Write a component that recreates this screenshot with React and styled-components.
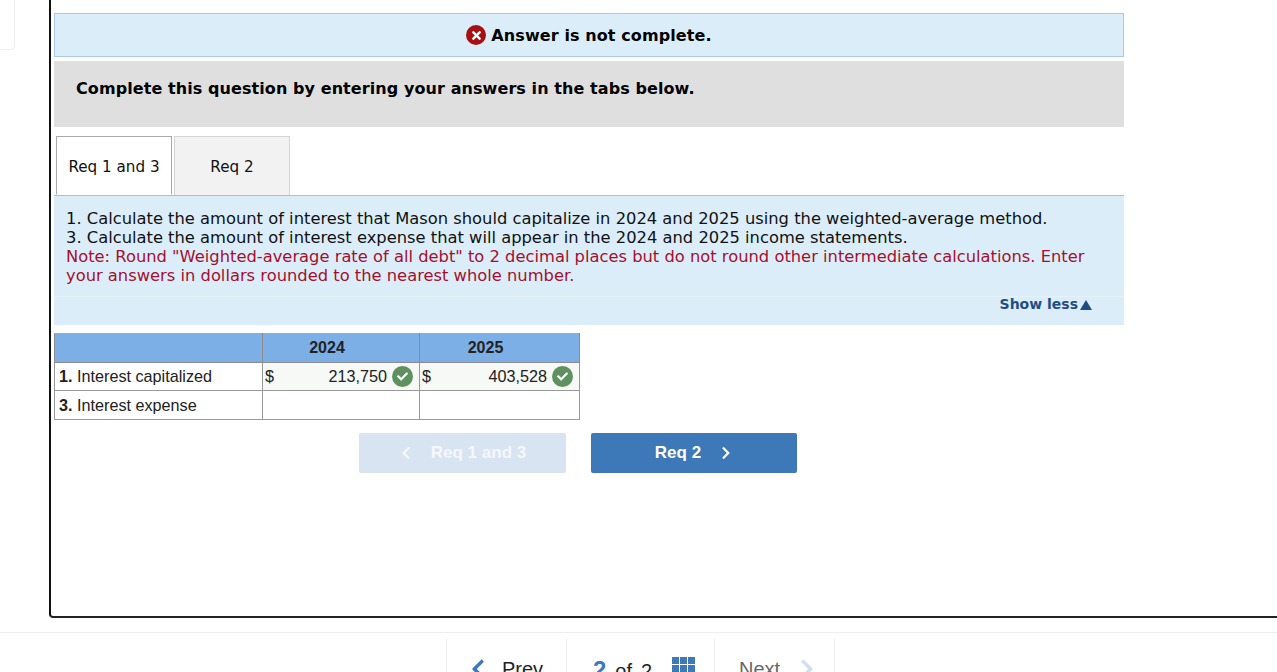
import React from 'react';
import styled, { createGlobalStyle } from 'styled-components';
import { FaCheck, FaTimes, FaChevronLeft, FaChevronRight } from 'react-icons/fa';

const GlobalStyle = createGlobalStyle`
  html, body {
    margin: 0;
    padding: 0;
    background: #fff;
    overflow: hidden;
  }
`;

const Page = styled.div`
  position: relative;
  width: 1277px;
  height: 672px;
  overflow: hidden;
  background: #fff;
`;

// card edge peeking in at the top left
const SideCard = styled.div`
  position: absolute;
  left: -20px;
  top: -10px;
  width: 33px;
  height: 58px;
  border: 1px solid #eee;
  border-radius: 4px;
`;

const Frame = styled.div`
  box-sizing: border-box;
  width: 1260px;
  height: 618px;
  margin-left: 49px;
  padding: 13px 0 0 3px;
  border-left: 2px solid #111;
  border-bottom: 2px solid #222;
  border-bottom-left-radius: 4px;
`;

const Content = styled.div`
  width: 1070px;
  font-family: 'DejaVu Sans', Verdana, sans-serif;
  color: #111;
`;

const AlertBar = styled.div`
  box-sizing: border-box;
  height: 44px;
  display: flex;
  align-items: center;
  justify-content: center;
  gap: 5px;
  background: #dcedfa;
  border: 1px solid #a9cbe8;
  font-size: 16px;
  letter-spacing: 0.1px;
  font-weight: bold;
  color: #000;
`;

const ErrorIcon = styled.span`
  width: 20px;
  height: 20px;
  border-radius: 50%;
  background: #a80f12;
  color: #fff;
  display: flex;
  align-items: center;
  justify-content: center;
  font-size: 13px;
`;

const Instruction = styled.div`
  box-sizing: border-box;
  height: 66px;
  margin-top: 4px;
  padding: 18px 22px 0;
  background: #dfdfdf;
  font-size: 16px;
  letter-spacing: 0.08px;
  line-height: 20px;
  font-weight: bold;
  color: #000;
`;

const TabRow = styled.div`
  display: flex;
  gap: 2px;
  height: 60px;
  margin-top: 9px;
  padding-left: 2px;
  border-bottom: 1px solid #bbb;
  box-sizing: border-box;
`;

const Tab = styled.div`
  box-sizing: border-box;
  width: 116px;
  padding-top: 2px;
  display: flex;
  align-items: center;
  justify-content: center;
  font-size: 15.2px;
  color: #111;
  background: ${p => (p.$active ? '#fff' : '#f2f2f2')};
  border: 1px solid ${p => (p.$active ? '#aaa' : '#d4d4d4')};
  border-bottom: ${p => (p.$active ? '1px solid #fff' : '0')};
`;

const Panel = styled.div`
  box-sizing: border-box;
  height: 129px;
  padding: 13px 12px 0;
  background: #dcedfa;
  font-size: 16.32px;
  line-height: 19px;
  color: #111;
`;

const Note = styled.div`
  color: #a3102e;
`;

const ShowLess = styled.div`
  display: flex;
  justify-content: flex-end;
  align-items: center;
  gap: 2px;
  margin: 11px -12px 0;
  padding-right: 32px;
  border-top: 1px solid #e4f1fb;
  font-size: 14px;
  line-height: 15px;
  font-weight: bold;
  color: #1f4e85;
`;

const UpTriangle = styled.span`
  width: 0;
  height: 0;
  border-left: 6px solid transparent;
  border-right: 6px solid transparent;
  border-bottom: 10px solid #1f4e85;
`;

const Table = styled.table`
  width: 526px;
  margin-top: 8px;
  border-collapse: collapse;
  table-layout: fixed;
  font-family: 'Liberation Sans', Arial, sans-serif;
  font-size: 16.2px;
  color: #222;
`;

const HeadCell = styled.th`
  height: 28px;
  padding: 0 28px 0 0;
  background: #7cafe5;
  border: 1px solid #8c8c8c;
  border-top-color: #aaa;
  font-size: 16px;
  font-weight: bold;
  color: #222;
`;

const LabelCell = styled.td`
  height: ${p => (p.$tall ? 28 : 27)}px;
  padding: 0 0 0 4px;
  border: 1px solid #999;
  white-space: nowrap;
`;

const AnswerCell = styled.td`
  height: 27px;
  padding: 0 6px 0 2px;
  border: 1px solid #999;
  background: ${p => (p.$filled ? '#f6f9f5' : '#fff')};
`;

const AnswerInner = styled.div`
  display: flex;
  align-items: center;
  gap: 5px;
`;

const Amount = styled.span`
  flex: 1;
  text-align: right;
`;

const CheckIcon = styled.span`
  width: 21px;
  height: 21px;
  border-radius: 50%;
  background: #5f9160;
  color: #fff;
  display: flex;
  align-items: center;
  justify-content: center;
  font-size: 11px;
`;

const ButtonRow = styled.div`
  display: flex;
  gap: 25px;
  margin: 13px 0 0 305px;
`;

const NavButton = styled.div`
  box-sizing: border-box;
  width: ${p => p.$width}px;
  height: 40px;
  display: flex;
  align-items: center;
  justify-content: center;
  gap: 18px;
  border-radius: 2px;
  background: ${p => (p.$disabled ? '#d9e4f2' : '#3d78b8')};
  color: ${p => (p.$disabled ? '#f4f7fb' : '#fff')};
  font-family: 'Liberation Sans', Arial, sans-serif;
  font-size: 17px;
  font-weight: bold;
`;

const Footer = styled.div`
  display: flex;
  height: 40px;
  margin-top: 14px;
  padding: 6px 0 0 446px;
  border-top: 1px solid #eee;
  font-family: 'Liberation Sans', Arial, sans-serif;
  font-size: 20px;
  color: #222;
`;

const FooterItem = styled.div`
  box-sizing: border-box;
  width: ${p => p.$width}px;
  height: 60px;
  display: flex;
  align-items: flex-start;
  gap: ${p => p.$gap}px;
  padding: 19px 0 0 ${p => p.$pad}px;
  border-left: 1px solid #eee;
  border-right: ${p => (p.$last ? '1px solid #eee' : '0')};
  color: ${p => (p.$muted ? '#666' : '#222')};
`;

const PageNumber = styled.span`
  color: #3d78b8;
  font-size: 24px;
  font-weight: bold;
  line-height: 24px;
`;

const OfLabel = styled.span`
  line-height: 26px;
`;

const GridIcon = styled.div`
  display: grid;
  grid-template-columns: repeat(3, 7px);
  grid-auto-rows: 7px;
  gap: 1px;
  margin: -1px 0 0 11px;
`;

const GridDot = styled.span`
  background: #3d78b8;
`;

const FooterChevron = styled.span`
  color: ${p => (p.$muted ? '#cfdff0' : '#3d78b8')};
  font-size: 22px;
  line-height: 22px;
`;

function App() {
  return (
    <Page>
      <GlobalStyle />
      <SideCard />
      <Frame>
        <Content>
          <AlertBar>
            <ErrorIcon><FaTimes /></ErrorIcon>
            Answer is not complete.
          </AlertBar>
          <Instruction>Complete this question by entering your answers in the tabs below.</Instruction>
          <TabRow>
            <Tab $active>Req 1 and 3</Tab>
            <Tab>Req 2</Tab>
          </TabRow>
          <Panel>
            <div>1. Calculate the amount of interest that Mason should capitalize in 2024 and 2025 using the weighted-average method.</div>
            <div>3. Calculate the amount of interest expense that will appear in the 2024 and 2025 income statements.</div>
            <Note>Note: Round "Weighted-average rate of all debt" to 2 decimal places but do not round other intermediate calculations. Enter your answers in dollars rounded to the nearest whole number.</Note>
            <ShowLess>Show less<UpTriangle /></ShowLess>
          </Panel>
          <Table>
            <colgroup>
              <col style={{ width: 208 }} />
              <col style={{ width: 157 }} />
              <col style={{ width: 160 }} />
            </colgroup>
            <thead>
              <tr>
                <HeadCell />
                <HeadCell>2024</HeadCell>
                <HeadCell>2025</HeadCell>
              </tr>
            </thead>
            <tbody>
              <tr>
                <LabelCell><b>1.</b> Interest capitalized</LabelCell>
                <AnswerCell $filled>
                  <AnswerInner>$<Amount>213,750</Amount><CheckIcon><FaCheck /></CheckIcon></AnswerInner>
                </AnswerCell>
                <AnswerCell $filled>
                  <AnswerInner>$<Amount>403,528</Amount><CheckIcon><FaCheck /></CheckIcon></AnswerInner>
                </AnswerCell>
              </tr>
              <tr>
                <LabelCell $tall><b>3.</b> Interest expense</LabelCell>
                <AnswerCell />
                <AnswerCell />
              </tr>
            </tbody>
          </Table>
          <ButtonRow>
            <NavButton $width={207} $disabled><FaChevronLeft size={14} />Req 1 and 3</NavButton>
            <NavButton $width={206}>Req 2<FaChevronRight size={14} /></NavButton>
          </ButtonRow>
        </Content>
      </Frame>
      <Footer>
        <FooterItem $width={120} $pad={20} $gap={13}>
          <FooterChevron><FaChevronLeft /></FooterChevron>
          <span>Prev</span>
        </FooterItem>
        <FooterItem $width={148} $pad={26} $gap={9}>
          <PageNumber>2</PageNumber>
          <OfLabel>of</OfLabel>
          <OfLabel>2</OfLabel>
          <GridIcon>
            {Array.from({ length: 9 }).map((_, i) => <GridDot key={i} />)}
          </GridIcon>
        </FooterItem>
        <FooterItem $width={121} $pad={24} $gap={16} $last $muted>
          <span>Next</span>
          <FooterChevron $muted><FaChevronRight /></FooterChevron>
        </FooterItem>
      </Footer>
    </Page>
  );
}

export default App;
